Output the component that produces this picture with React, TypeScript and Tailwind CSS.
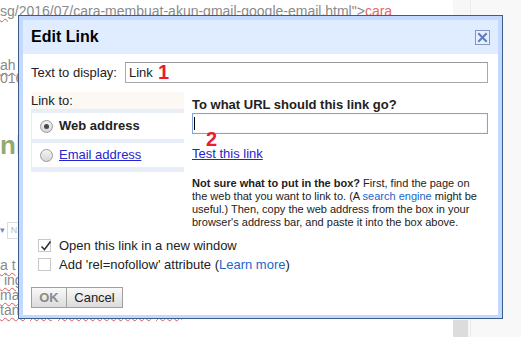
import React from "react";

function CloseIcon() {
  return (
    <svg width="15" height="15" viewBox="0 0 15 15" className="block">
      <rect x="0.5" y="0.5" width="14" height="14" fill="#e6efff" stroke="#7f98c4" />
      <path d="M4 4 L11 11 M11 4 L4 11" stroke="#5b7db8" strokeWidth="2" strokeLinecap="square" />
    </svg>
  );
}

function Radio({ checked }: { checked: boolean }) {
  return (
    <span className="relative flex h-[13px] w-[13px] items-center justify-center rounded-full border border-[#9a9a9a] bg-gradient-to-b from-[#f4f4f4] to-[#d6d6d6]">
      {checked && <span className="h-[5px] w-[5px] rounded-full bg-[#4a4a4a]" />}
    </span>
  );
}

function CheckBox({ checked }: { checked: boolean }) {
  return (
    <span className="relative block h-[13px] w-[13px] border border-[#c8c8c8] bg-white">
      {checked && (
        <svg width="14" height="14" viewBox="0 0 14 14" className="absolute left-[0px] top-[-1px]">
          <path d="M2.5 7.5 L5.5 10.5 L11.5 2.5" fill="none" stroke="#333" strokeWidth="1.6" />
        </svg>
      )}
    </span>
  );
}

const Squiggle = "underline decoration-wavy decoration-[#e05555] decoration-[1px] underline-offset-2";

export default function App() {
  return (
    <div className="relative h-[337px] w-[521px] overflow-hidden bg-white font-['Liberation_Sans',Arial,sans-serif]">
      {/* background page */}
      <div className="flex h-full">
        <div className="w-[453px] shrink-0 text-[#8a8a8a]">
          <div className="mt-[3px] whitespace-nowrap text-[14px] leading-[16px]">
            <span className={Squiggle}>sg</span>/2016/07/cara-membuat-akun-gmail-google-email.html"&gt;<span className="text-[#e06a6a]">cara</span>
          </div>
          <div className="mt-[40px] text-[14px] leading-[12px]">
            <span className={Squiggle}>ah</span>
          </div>
          <div className="text-[14px] leading-[14px]">016</div>
          <div className="mt-[47px] text-[26px] font-bold leading-[26px] text-[#93a872]">nk</div>
          <div className="mt-[64px] flex items-center gap-[2px] text-[9px]">
            <span className="text-[#6c8ebf]">▾</span>
            <span className="flex h-[17px] w-[14px] items-center justify-center border border-[#ddd] text-[#bbb]">N</span>
          </div>
          <div className="mt-[19px] text-[14px] leading-[15px]">
            <div><span className={Squiggle}>a t</span></div>
            <div><span className={Squiggle}>&nbsp;ing</span></div>
            <div><span className={Squiggle}>mat</span></div>
            <div className="whitespace-nowrap"><span className={Squiggle}>tan&nbsp;&nbsp;pengaturan&nbsp;dan&nbsp;tampilan</span></div>
          </div>
        </div>
        <div className="flex w-[17px] shrink-0 flex-col bg-[#f7f7f7]">
          <div className="flex-1" />
          <div className="h-[17px] w-[15px] bg-[#dcdcdc]" />
        </div>
        <div className="flex-1 border-l border-[#ececec] bg-[#f8f8f8]" />
      </div>

      {/* dialog */}
      <div className="absolute left-[18px] top-[15px] flex h-[304px] w-[485px] flex-col border border-[#3e5d86] bg-[#c3d9ff] px-[4px] pb-[3px] pt-[4px] text-[13px] text-[#222]">
        <div className="flex h-[34px] shrink-0 items-center justify-between bg-[#e0ecff] pl-[8px] pr-[8px]">
          <span className="text-[16px] font-bold text-black">Edit Link</span>
          <CloseIcon />
        </div>
        <div className="flex flex-1 flex-col bg-white pl-[8px] pr-[10px] pt-[8px]">
          <div className="flex items-center">
            <span className="w-[94px] shrink-0">Text to display:</span>
            <div className="relative flex h-[21px] flex-1 items-center border border-[#a9a9a9] border-t-[#9a9a9a] px-[3px]">
              <span>Link</span>
              <span className="absolute left-[32px] top-[-1px] text-[20px] font-bold leading-[20px] text-[#ec1c2c]">1</span>
            </div>
          </div>

          <div className="mt-[9px] flex">
            <div className="w-[153px] shrink-0">
              <div className="flex h-[17px] items-center bg-[#fcf8f4]">Link to:</div>
              <div className="flex flex-col gap-[4px] bg-[#e8eef7] pb-[5px] pl-[1px] pt-[4px]">
                <div className="flex h-[26px] items-center gap-[6px] bg-white pl-[8px]">
                  <Radio checked />
                  <span className="font-bold">Web address</span>
                </div>
                <div className="flex h-[24px] items-center gap-[6px] bg-white pl-[8px]">
                  <Radio checked={false} />
                  <span className="text-[#2525d0] underline">Email address</span>
                </div>
              </div>
            </div>
            <div className="ml-[8px] flex-1 pt-[5px]">
              <div className="font-bold leading-[15px]">To what URL should this link go?</div>
              <div className="relative mt-[1px] h-[21px] border border-[#7ea6dd] shadow-[inset_0_0_1px_#9ab9e6]">
                <span className="absolute left-[1px] top-[3px] h-[13px] w-[1px] bg-black" />
                <span className="absolute left-[13px] top-[15px] text-[20px] font-bold leading-[20px] text-[#ec1c2c]">2</span>
              </div>
              <div className="mt-[12px] leading-[15px] text-[#2525d0] underline">Test this link</div>
              <p className="mt-[16px] w-[292px] text-[11px] leading-[13px] text-[#222]">
                <b>Not sure what to put in the box?</b> First, find the page on the web that you want to link to. (A{" "}
                <span className="text-[#1a66cc]">search engine</span> might be useful.) Then, copy the web address from the box in your browser's address bar, and paste it into the box above.
              </p>
            </div>
          </div>

          <div className="mt-[10px] flex flex-col gap-[6px] pl-[7px]">
            <div className="flex items-center gap-[8px]">
              <CheckBox checked />
              <span className="leading-[13px]">Open this link in a new window</span>
            </div>
            <div className="flex items-center gap-[8px]">
              <CheckBox checked={false} />
              <span className="leading-[13px]">
                Add 'rel=nofollow' attribute (<span className="text-[#1a66cc]">Learn more</span>)
              </span>
            </div>
          </div>

          <div className="mt-[16px] flex">
            <button className="h-[21px] w-[36px] border border-[#a0a0a0] bg-gradient-to-b from-[#f9f9f9] to-[#dcdcdc] text-[13px] font-bold text-[#8a8a8a]">
              OK
            </button>
            <button className="h-[21px] w-[56px] border border-l-0 border-[#a0a0a0] bg-gradient-to-b from-[#f9f9f9] to-[#dcdcdc] text-[13px] text-[#222]">
              Cancel
            </button>
          </div>
        </div>
      </div>
    </div>
  );
}
